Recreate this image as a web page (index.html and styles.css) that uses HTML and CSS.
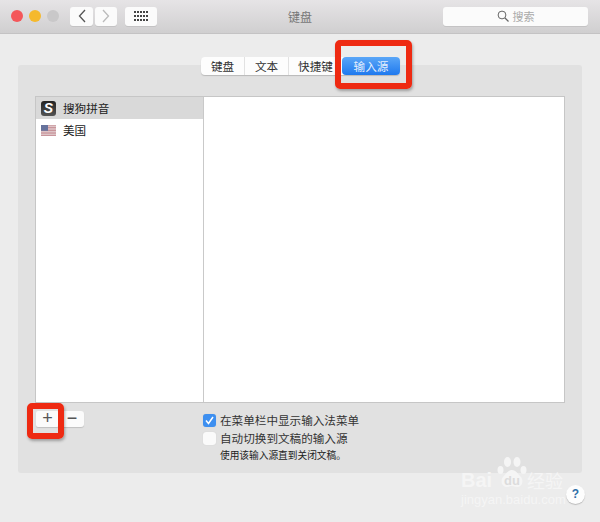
FILE: index.html
```html
<!DOCTYPE html>
<html lang="zh">
<head>
<meta charset="utf-8">
<title>键盘</title>
<link rel="stylesheet" href="styles.css">
</head>
<body>
<div class="window">
  <header class="titlebar">
    <div class="lights">
      <span class="light red"></span><span class="light yellow"></span><span class="light gray"></span>
    </div>
    <div class="navgroup">
      <span class="tbtn nav"><svg width="10" height="16" viewBox="0 0 10 16"><path d="M8 2 2.500 8 8 14" fill="none" stroke="#555" stroke-width="1.300"/></svg></span>
      <span class="tbtn nav fwd"><svg width="10" height="16" viewBox="0 0 10 16"><path d="M2 2 7.500 8 2 14" fill="none" stroke="#bbb" stroke-width="1.300"/></svg></span>
    </div>
    <span class="tbtn grid"><svg width="15" height="11" viewBox="0 0 15 11" fill="#444"><rect x="0" y="0" width="2" height="2"/><rect x="3" y="0" width="2" height="2"/><rect x="6" y="0" width="2" height="2"/><rect x="9" y="0" width="2" height="2"/><rect x="12" y="0" width="2" height="2"/><rect x="0" y="4" width="2" height="2"/><rect x="3" y="4" width="2" height="2"/><rect x="6" y="4" width="2" height="2"/><rect x="9" y="4" width="2" height="2"/><rect x="12" y="4" width="2" height="2"/><rect x="0" y="8" width="2" height="2"/><rect x="3" y="8" width="2" height="2"/><rect x="6" y="8" width="2" height="2"/><rect x="9" y="8" width="2" height="2"/><rect x="12" y="8" width="2" height="2"/></svg></span>
    <div class="title">键盘</div>
    <div class="search">
      <svg width="12" height="12" viewBox="0 0 12 12"><circle cx="5" cy="5" r="3.900" fill="none" stroke="#666" stroke-width="1"/><path d="M8 8 11.500 11.500" stroke="#666" stroke-width="1.200"/></svg>
      <span>搜索</span>
    </div>
  </header>
  <main class="content">
    <section class="panel">
      <nav class="tabs">
        <span class="tab">键盘</span><span class="tab">文本</span><span class="tab wide">快捷键</span><span class="tab active">输入源</span>
      </nav>
      <div class="box">
        <ul class="sources">
          <li class="source selected">
            <span class="sogou">S</span>
            <span>搜狗拼音</span>
          </li>
          <li class="source">
            <svg class="flag" width="15" height="11" viewBox="0 0 15 11"><rect width="15" height="11" fill="#eee8e8"/><path d="M0 .8h15M0 2.400h15M0 4h15M0 5.600h15M0 7.200h15M0 8.800h15M0 10.400h15" stroke="#c08088" stroke-width=".9"/><rect width="7" height="5.800" fill="#66729c"/></svg>
            <span>美国</span>
          </li>
        </ul>
        <div class="detail"></div>
      </div>
      <div class="footer">
        <div class="plusminus">
          <span class="pm">+</span><span class="pm minus">−</span>
        </div>
        <div class="options">
          <label class="opt"><span class="check on"><svg width="11" height="11" viewBox="0 0 11 11"><path d="M2 5.500 4.500 8.500 9 2" fill="none" stroke="#fff" stroke-width="1.500"/></svg></span>在菜单栏中显示输入法菜单</label>
          <label class="opt"><span class="check"></span>自动切换到文稿的输入源</label>
          <p class="hint">使用该输入源直到关闭文稿。</p>
        </div>
      </div>
    </section>
  </main>
  <span class="mark mark-tab"></span>
  <span class="mark mark-plus"></span>
  <div class="watermark">
    <svg class="paw" width="30" height="34" viewBox="0 0 30 34" fill="#f5f5f5"><ellipse cx="3.500" cy="14" rx="3" ry="4"/><ellipse cx="10.500" cy="6" rx="3.500" ry="5"/><ellipse cx="20" cy="6" rx="3.500" ry="5"/><ellipse cx="26.500" cy="14" rx="3" ry="4"/><path d="M15 14c-4 0-6 4-9 7-3 4-1 10 4 10 2 0 3-1 5-1s3 1 5 1c5 0 7-6 4-10-3-3-5-7-9-7z"/></svg>
    <div class="wm-main"><span class="wm-bai">Bai</span><span class="wm-du">du</span><span class="wm-cn">经验</span></div>
    <div class="wm-url">jingyan.baidu.com</div>
  </div>
  <span class="help">?</span>
</div>
</body>
</html>
```
FILE: styles.css
```css
* { box-sizing: border-box; }
html, body { margin: 0; padding: 0; }
body {
  width: 600px;
  height: 522px;
  overflow: hidden;
  background: #ececec;
  font-family: "Noto Sans CJK SC", "Liberation Sans", sans-serif;
  color: #333;
}
.window { position: relative; width: 600px; height: 522px; overflow: hidden; }

.titlebar {
  display: flex;
  align-items: center;
  height: 34px;
  padding: 0 12px 1px 11px;
  background: linear-gradient(#e6e4e6, #d0cfd0);
  border-bottom: 1px solid #c4c3c4;
  position: relative;
}
.lights { display: flex; gap: 6px; }
.light { width: 12px; height: 12px; border-radius: 50%; }
.red { background: #f4575a; }
.yellow { background: #f5b92c; }
.gray { background: #c9c8c9; }
.navgroup { display: flex; gap: 2px; margin-left: 11px; }
.tbtn {
  display: flex;
  align-items: center;
  justify-content: center;
  height: 19px;
  background: #fbfbfb;
  border-radius: 3px;
  box-shadow: 0 1px 0 #c4c3c4;
}
.nav { width: 23px; }
.nav.fwd { width: 22px; }
.grid { width: 32px; margin-left: 8px; }
.title {
  position: absolute;
  left: 0;
  right: 0;
  top: 8px;
  text-align: center;
  font-size: 12px;
  line-height: 18px;
  color: #777;
}
.search {
  margin-left: auto;
  width: 145px;
  height: 19px;
  display: flex;
  align-items: center;
  justify-content: center;
  gap: 4px;
  background: #fbfbfb;
  border-radius: 3px;
  box-shadow: 0 1px 0 #c4c3c4;
  font-size: 11px;
  color: #aaa;
}

.content { padding: 31px 18px 0; }
.panel {
  position: relative;
  height: 408px;
  padding: 31px 17px 0;
  background: #e1e1e1;
  border-radius: 3px;
}
.tabs {
  position: absolute;
  top: -8px;
  left: 183px;
  display: flex;
  height: 18px;
  background: #fdfdfd;
  border-radius: 4px;
  box-shadow: 0 1px 1px #b9b9b9;
  font-size: 11.600px;
  line-height: 18px;
  color: #333;
}
.tab { width: 44px; text-align: center; border-right: 1px solid #e2e2e2; }
.tab.wide { width: 53px; border-right: 0; padding-left: 1px; padding-right: 1px; }
.tab.active {
  width: 58px;
  border-right: 0;
  border-radius: 4px;
  background: linear-gradient(#5aa6f7, #1f79ee);
  color: #e4effd;
}

.box {
  display: flex;
  height: 307px;
  width: 530px;
  background: #fff;
  border: 1px solid #c6c6c6;
}
.sources {
  list-style: none;
  margin: 0;
  padding: 0;
  width: 168px;
  border-right: 1px solid #c9c9c9;
  font-size: 11.600px;
}
.source {
  display: flex;
  align-items: center;
  gap: 7px;
  height: 22px;
  padding-left: 5px;
  line-height: 18px;
  color: #222;
}
.selected { background: #d9d9d9; }
.sogou {
  width: 15px;
  height: 15px;
  border-radius: 3px;
  background: linear-gradient(#222, #555);
  color: #fff;
  font: italic bold 14px/15px "Liberation Sans", sans-serif;
  text-align: center;
}
.flag { width: 15px; }
.detail { flex: 1; }

.footer { display: flex; padding-top: 8px; }
.plusminus { display: flex; width: 168px; }
.pm {
  width: 23px;
  height: 16px;
  margin-left: 1px;
  background: #fbfbfb;
  border-radius: 2px;
  box-shadow: 0 1px 1px #c0c0c0;
  text-align: center;
  font: 18px/15px "Liberation Sans", sans-serif;
  color: #555;
}
.pm.minus { width: 25px; margin-left: 0; border-left: 1px solid #ddd; border-radius: 0 3px 3px 0; }
.options { font-size: 11.600px; line-height: 18px; color: #333; }
.opt { display: flex; align-items: center; gap: 4px; }
.check {
  width: 13px;
  height: 13px;
  border-radius: 3px;
  background: #fafafa;
  box-shadow: 0 0 1px #c0c0c0;
  display: flex;
  align-items: center;
  justify-content: center;
}
.check.on { background: #3d8ff0; }
.hint { margin: 0 0 0 17px; font-size: 9.700px; line-height: 16px; color: #222; }

.mark {
  position: absolute;
  border: 6px solid #ee2a12;
  border-radius: 5px;
  box-shadow: 1px 2px 3px rgba(0, 0, 0, .3);
}
.mark-tab { left: 335px; top: 40px; width: 77px; height: 49px; }
.mark-plus { left: 27px; top: 403px; width: 37px; height: 36px; }

.watermark { position: absolute; left: 461px; top: 456px; width: 118px; color: #f5f5f5; }
.paw { position: absolute; left: 36px; top: 0; }
.wm-main { position: relative; display: flex; align-items: flex-end; height: 35px; white-space: nowrap; }
.wm-bai { width: 36px; font: bold 20px/22px "Liberation Sans", sans-serif; }
.wm-du { width: 30px; text-align: center; color: #dcdcdc; font: bold 13px/20px "Liberation Sans", sans-serif; }
.wm-cn { font-size: 18px; line-height: 22px; }
.wm-url { font: 13px/16px "Liberation Sans", sans-serif; white-space: nowrap; margin-top: 1px; }
.help {
  position: absolute;
  left: 566px;
  top: 485px;
  width: 19px;
  height: 19px;
  border-radius: 50%;
  background: #fdfdfd;
  box-shadow: 0 1px 1px #bbb;
  text-align: center;
  font: bold 12px/19px "Liberation Sans", sans-serif;
  color: #2f6fa8;
}
```
